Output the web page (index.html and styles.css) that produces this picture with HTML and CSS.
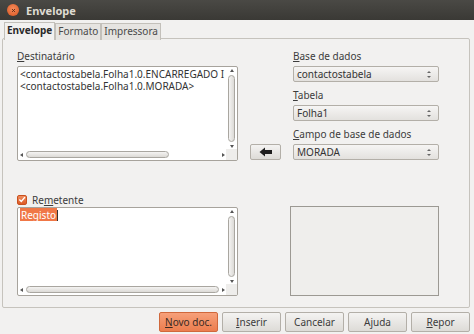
FILE: index.html
```html
<!DOCTYPE html>
<html>
<head>
<meta charset="utf-8">
<link rel="stylesheet" href="styles.css">
</head>
<body>
<div class="window">
  <div class="titlebar">
    <span class="close"><svg width="10" height="10" viewBox="0 0 10 10"><path d="M3 3L7 7M7 3L3 7" stroke="#5a2a14" stroke-width="1.4"/></svg></span>
    <span class="title">Envelope</span>
  </div>
  <div class="tabs">
    <div class="tab active">Envelope</div>
    <div class="tab">Formato</div>
    <div class="tab">Impressora</div>
  </div>
  <div class="panel">
    <div class="top">
      <div class="dest">
        <div class="label"><u>D</u>estinatário</div>
        <div class="textbox tb1">
          <div class="lines">
            <div>&lt;contactostabela.Folha1.0.ENCARREGADO I</div>
            <div>&lt;contactostabela.Folha1.0.MORADA&gt;</div>
          </div>
          <div class="vscroll"><span class="arr up"></span><span class="vthumb"></span><span class="arr down"></span></div>
          <div class="hscroll"><span class="harr left"></span><span class="hthumb short"></span><span class="harr right"></span></div>
          <div class="corner"></div>
        </div>
      </div>
      <div class="mid">
        <div class="btn arrowbtn"><svg width="14" height="10" viewBox="0 0 14 10"><path d="M0.5 5L6 0.5V3H13V7H6V9.5Z" fill="#1e1e1e"/></svg></div>
      </div>
      <div class="db">
        <div class="label"><u>B</u>ase de dados</div>
        <div class="combo"><span>contactostabela</span><span class="spin"></span></div>
        <div class="label gap"><u>T</u>abela</div>
        <div class="combo"><span>Folha1</span><span class="spin"></span></div>
        <div class="label gap"><u>C</u>ampo de base de dados</div>
        <div class="combo"><span>MORADA</span><span class="spin"></span></div>
      </div>
    </div>
    <div class="bottom">
      <div class="sender">
        <div class="checkrow"><span class="check"><svg width="9" height="9" viewBox="0 0 9 9"><path d="M1.5 4.5L3.7 6.8L7.8 1.8" stroke="#fff" stroke-width="1.6" fill="none"/></svg></span><span>Re<u>m</u>etente</span></div>
        <div class="textbox tb2">
          <div class="lines"><div><span class="sel">Registo</span><span class="caret"></span></div></div>
          <div class="vscroll"><span class="arr up"></span><span class="vthumb"></span><span class="arr down"></span></div>
          <div class="hscroll"><span class="harr left"></span><span class="hthumb long"></span><span class="harr right"></span></div>
          <div class="corner"></div>
        </div>
      </div>
      <div class="preview"></div>
    </div>
  </div>
  <div class="buttons">
    <div class="btn default"><u>N</u>ovo doc.</div>
    <div class="btn"><u>I</u>nserir</div>
    <div class="btn">Cancelar</div>
    <div class="btn">A<u>j</u>uda</div>
    <div class="btn"><u>R</u>epor</div>
  </div>
</div>
</body>
</html>
```

FILE: styles.css
```css
* { box-sizing: border-box; }
html, body { margin: 0; padding: 0; }
body {
  width: 474px;
  height: 334px;
  overflow: hidden;
  background: #f2f1f0;
  font-family: "Noto Sans", "DejaVu Sans", sans-serif;
  font-size: 10px;
  color: #3c3c3c;
}
u { text-decoration: underline; text-underline-offset: 1px; }
.window { width: 474px; height: 334px; display: flex; flex-direction: column; }
.titlebar {
  height: 20px;
  background: linear-gradient(#4a4945, #3a3935);
  display: flex;
  align-items: center;
  padding-left: 7px;
  gap: 7px;
  color: #dfdbd2;
  font-weight: bold;
  font-size: 11px;
}
.close {
  width: 12px; height: 12px; border-radius: 50%;
  background: radial-gradient(circle at 50% 40%, #f58c5c, #d9541f);
  display: flex; align-items: center; justify-content: center;
}
.close svg { width: 7px; height: 7px; }
.tabs {
  display: flex;
  padding-left: 4px;
  margin-top: 2px;
  height: 17px;
  position: relative;
  z-index: 1;
}
.tab {
  height: 17px;
  padding: 0 2px;
  border: 1px solid #c3c0ba;
  border-bottom: none;
  background: #e6e4e1;
  color: #4a4a4a;
  line-height: 15px;
  margin-top: 1px;
}
.tab.active {
  background: #f2f1f0;
  color: #2a2a2a;
  font-weight: bold;
  height: 18px;
  margin-top: 0;
  padding: 0 2px;
}
.panel {
  margin: -1px 4px 0 2px;
  height: 270px;
  border: 1px solid #c6c3bd;
  border-radius: 2px;
  padding: 11px 0 0 14px;
  display: flex;
  flex-direction: column;
}
.top { display: flex; }
.label { height: 16px; line-height: 12px; color: #3c3c3c; }
.label.gap { margin-top: 7px; }
.dest { width: 221px; }
.textbox {
  position: relative;
  background: #fff;
  border: 1px solid #a7a39c;
  border-radius: 2px;
  overflow: hidden;
}
.tb1 { height: 95px; }
.tb2 { height: 89px; }
.lines { padding: 1px 0 0 2px; white-space: nowrap; overflow: hidden; width: 209px; line-height: 12px; color: #333; }
.vscroll {
  position: absolute; right: 1px; top: 1px; width: 9px; bottom: 11px;
  display: flex; flex-direction: column; align-items: center;
}
.vthumb {
  flex: 1; width: 7px; margin: 2px 0;
  border: 1px solid #a9a6a0; border-radius: 4px;
  background: linear-gradient(90deg, #f4f3f2, #dcdad6);
}
.arr { width: 0; height: 0; margin: 1px 0; border-left: 2.5px solid transparent; border-right: 2.5px solid transparent; }
.arr.up { border-bottom: 3px solid #555; }
.arr.down { border-top: 3px solid #555; }
.hscroll {
  position: absolute; left: 1px; bottom: 1px; right: 11px; height: 9px;
  display: flex; align-items: center;
}
.hthumb {
  height: 7px; margin: 0 2px;
  border: 1px solid #a9a6a0; border-radius: 4px;
  background: linear-gradient(#f4f3f2, #dcdad6);
}
.hthumb.short { width: 143px; }
.hthumb.long { width: 193px; }
.harr { width: 0; height: 0; margin: 0 1px; border-top: 2.5px solid transparent; border-bottom: 2.5px solid transparent; }
.harr.left { border-right: 3px solid #555; }
.harr.right { border-left: 3px solid #555; margin-left: auto; }
.corner { position: absolute; right: 0; bottom: 0; width: 11px; height: 11px; background: #eeedeb; }
.mid { width: 55px; display: flex; align-items: flex-end; padding-left: 12px; }
.btn {
  height: 19px;
  border: 1px solid #b3afa8;
  border-radius: 2px;
  background: linear-gradient(#f4f3f2, #dddbd7);
  display: flex; align-items: center; justify-content: center;
  color: #3c3c3c;
}
.arrowbtn { width: 31px; height: 16px; margin-bottom: 1px; }
.db { width: 146px; }
.combo {
  height: 16px;
  border: 1px solid #b3afa8;
  border-radius: 2px;
  background: linear-gradient(#f6f5f4, #e3e1de);
  display: flex; align-items: center; justify-content: space-between;
  padding: 0 7px 0 3px;
  color: #333;
}
.spin {
  width: 4px; height: 7px; position: relative;
}
.spin::before, .spin::after {
  content: ""; position: absolute; left: 0; width: 0; height: 0;
  border-left: 2px solid transparent; border-right: 2px solid transparent;
}
.spin::before { top: 0; border-bottom: 2.5px solid #666; }
.spin::after { bottom: 0; border-top: 2.5px solid #666; }
.bottom { display: flex; align-items: flex-end; margin-top: 31px; }
.sender { width: 221px; }
.checkrow { display: flex; align-items: center; height: 15px; gap: 5px; line-height: 12px; }
.check {
  width: 10px; height: 10px; border-radius: 2px;
  background: linear-gradient(#f08d5f, #dd5a25);
  border: 1px solid #c8501e;
  display: flex; align-items: center; justify-content: center;
}
.sel { background: #f07746; color: #fff; padding: 0 1px; }
.caret { display: inline-block; width: 1px; height: 11px; background: #333; vertical-align: -2px; }
.preview {
  width: 149px; height: 90px; margin-left: 52px;
  border: 1px solid #9c9993;
  background: #efeeec;
}
.buttons {
  display: flex; justify-content: flex-end; gap: 4px;
  padding: 4px 4px 0 0;
}
.buttons .btn { width: 59px; height: 20px; }
.btn.default {
  background: linear-gradient(#f6a07a, #ec7d4e);
  border-color: #d0683c;
  color: #3a2a22;
}
```
